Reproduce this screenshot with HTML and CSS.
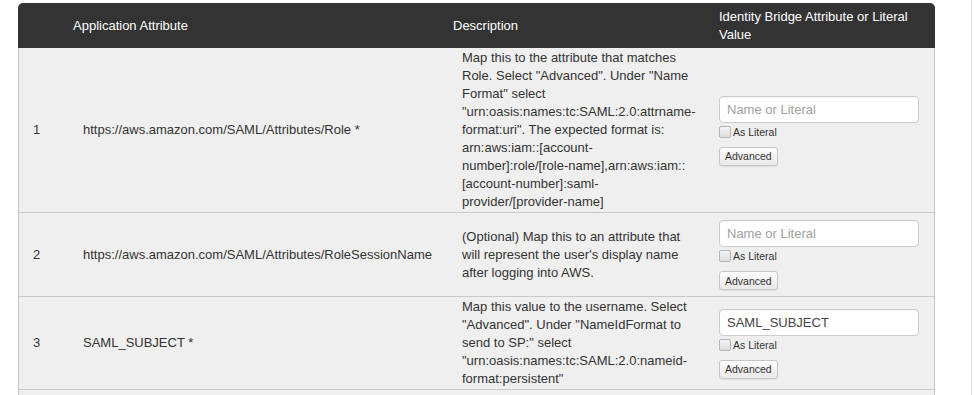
FILE: index.html
```html
<!DOCTYPE html>
<html>
<head>
<meta charset="utf-8">
<link rel="stylesheet" href="styles.css">
</head>
<body>
<div class="page">
  <table class="attr-table">
    <colgroup>
      <col class="c-num">
      <col class="c-attr">
      <col class="c-desc">
      <col class="c-val">
    </colgroup>
    <thead>
      <tr>
        <th class="h-num"></th>
        <th>Application Attribute</th>
        <th>Description</th>
        <th class="h-val">Identity Bridge Attribute or Literal Value</th>
      </tr>
    </thead>
    <tbody>
      <tr class="r1">
        <td class="num">1</td>
        <td class="attr">https://aws.amazon.com/SAML/Attributes/Role *</td>
        <td class="desc">Map this to the attribute that matches Role. Select "Advanced". Under "Name Format" select "urn:oasis:names:tc:SAML:2.0:attrname-format:uri". The expected format is: arn:aws:iam::[account-<br>number]:role/[role-name],arn:aws:iam::<br>[account-number]:saml-<br>provider/[provider-name]</td>
        <td class="val">
          <input class="txt" type="text" placeholder="Name or Literal">
          <label class="lit"><input type="checkbox" class="chk">As Literal</label>
          <button class="btn">Advanced</button>
        </td>
      </tr>
      <tr class="r2">
        <td class="num">2</td>
        <td class="attr">https://aws.amazon.com/SAML/Attributes/RoleSessionName</td>
        <td class="desc">(Optional) Map this to an attribute that will represent the user's display name after logging into AWS.</td>
        <td class="val">
          <input class="txt" type="text" placeholder="Name or Literal">
          <label class="lit"><input type="checkbox" class="chk">As Literal</label>
          <button class="btn">Advanced</button>
        </td>
      </tr>
      <tr class="r3">
        <td class="num">3</td>
        <td class="attr">SAML_SUBJECT *</td>
        <td class="desc">Map this value to the username. Select "Advanced". Under "NameIdFormat to send to SP:" select "urn:oasis:names:tc:SAML:2.0:nameid-format:persistent"</td>
        <td class="val">
          <input class="txt" type="text" placeholder="Name or Literal" value="SAML_SUBJECT">
          <label class="lit"><input type="checkbox" class="chk">As Literal</label>
          <button class="btn">Advanced</button>
        </td>
      </tr>
      <tr class="r4">
        <td class="num"></td>
        <td class="attr"></td>
        <td class="desc"></td>
        <td class="val"></td>
      </tr>
    </tbody>
  </table>
</div>
</body>
</html>
```
FILE: styles.css
```css
html, body {
  margin: 0;
  padding: 0;
  background: #fff;
  overflow: hidden;
  height: 395px;
}
.page {
  width: 972px;
  height: 395px;
  overflow: hidden;
  border-right: 1px solid #dcdcdc;
  padding: 3px 0 0 18px;
  box-sizing: border-box;
  font-family: "Liberation Sans", Arial, sans-serif;
  font-size: 13px;
  color: #333;
}
.attr-table {
  width: 917px;
  table-layout: fixed;
  border-collapse: separate;
  border-spacing: 0;
}
.c-num { width: 45px; }
.c-attr { width: 380px; }
.c-desc { width: 266px; }
.c-val { width: 226px; }

.attr-table th {
  background: #333;
  color: #fff;
  font-weight: normal;
  text-align: left;
  vertical-align: middle;
  line-height: 18px;
  height: 45px;
  padding: 0 10px;
  box-sizing: border-box;
}
.attr-table th:first-child { border-top-left-radius: 5px; }
.attr-table th:last-child { border-top-right-radius: 5px; padding-right: 15px; }

.attr-table td {
  background: #efefef;
  border-bottom: 1px solid #c9c9c9;
  vertical-align: middle;
  line-height: 18px;
  padding: 0;
}
.attr-table td:first-child { border-left: 1px solid #c4c4c4; }
.attr-table td:last-child { border-right: 1px solid #c4c4c4; }

.num { padding-left: 14px !important; }
.attr { padding-left: 20px !important; }
.desc { padding: 1px 9px 1px 19px !important; }
.val { padding: 7px 15px 6px 10px !important; }

.r4 td { height: 20px; }

.txt {
  display: block;
  width: 200px;
  height: 27px;
  box-sizing: border-box;
  border: 1px solid #ccc;
  border-radius: 4px;
  background: #fff;
  padding: 0 7px;
  margin: 0;
  font-family: "Liberation Sans", Arial, sans-serif;
  font-size: 13px;
  color: #444;
  box-shadow: inset 0 1px 1px rgba(0,0,0,0.04);
}
.txt::placeholder { color: #a0a0a0; }

.lit {
  display: flex;
  align-items: center;
  height: 14px;
  margin-top: 2px;
  font-size: 10.5px;
  line-height: 14px;
  color: #333;
}
.chk {
  appearance: none;
  -webkit-appearance: none;
  width: 12px;
  height: 12px;
  margin: 0 2px 0 0;
  border: 1px solid #b5b5b5;
  border-radius: 2px;
  background: linear-gradient(#f4f4f4, #dedede);
  box-sizing: border-box;
}
.btn {
  display: block;
  margin-top: 8px;
  height: 19px;
  padding: 0 5px;
  font-family: "Liberation Sans", Arial, sans-serif;
  font-size: 10.5px;
  color: #333;
  border: 1px solid #c6c6c6;
  border-radius: 3px;
  background: linear-gradient(#fdfdfd, #e8e8e8);
  box-shadow: 0 1px 1px rgba(0,0,0,0.08);
}
```
